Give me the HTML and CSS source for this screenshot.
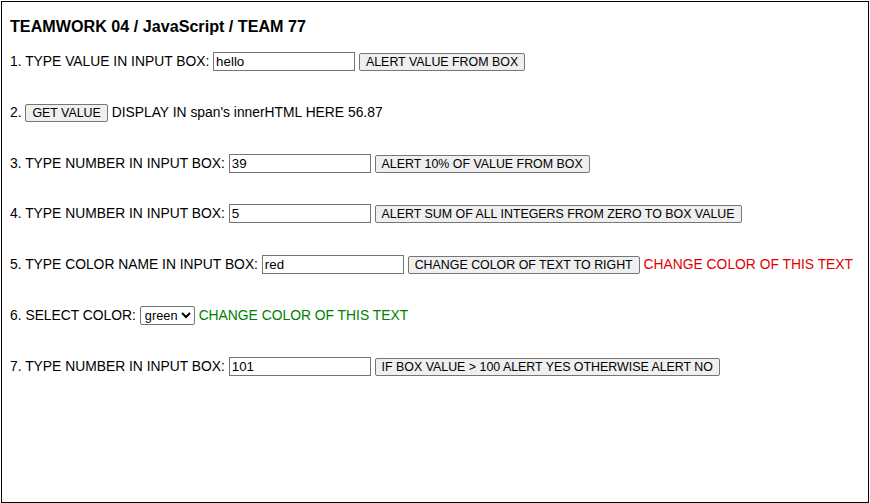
FILE: index.html
```html
<!DOCTYPE html>
<html>
<head>
<meta charset="utf-8">
<title>TEAMWORK 04</title>
<link rel="stylesheet" href="styles.css">
</head>
<body>
<div class="frame">
  <h1 class="title">TEAMWORK 04 / JavaScript / TEAM 77</h1>
  <div class="rows">
    <div class="row">1. TYPE VALUE IN INPUT BOX: <input class="box" type="text" value="hello"> <button class="btn">ALERT VALUE FROM BOX</button></div>
    <div class="row">2. <button class="btn">GET VALUE</button> DISPLAY IN span's innerHTML HERE <span>56.87</span></div>
    <div class="row">3. TYPE NUMBER IN INPUT BOX: <input class="box" type="text" value="39"> <button class="btn">ALERT 10% OF VALUE FROM BOX</button></div>
    <div class="row">4. TYPE NUMBER IN INPUT BOX: <input class="box" type="text" value="5"> <button class="btn">ALERT SUM OF ALL INTEGERS FROM ZERO TO BOX VALUE</button></div>
    <div class="row">5. TYPE COLOR NAME IN INPUT BOX: <input class="box" type="text" value="red"> <button class="btn">CHANGE COLOR OF TEXT TO RIGHT</button> <span class="red">CHANGE COLOR OF THIS TEXT</span></div>
    <div class="row">6. SELECT COLOR: <select class="sel"><option>red</option><option selected>green</option><option>blue</option></select> <span class="green">CHANGE COLOR OF THIS TEXT</span></div>
    <div class="row">7. TYPE NUMBER IN INPUT BOX: <input class="box" type="text" value="101"> <button class="btn">IF BOX VALUE &gt; 100 ALERT YES OTHERWISE ALERT NO</button></div>
  </div>
</div>
</body>
</html>
```

FILE: styles.css
```css
html, body {
  margin: 0;
  padding: 0;
}
body {
  font-family: "Liberation Sans", Arial, sans-serif;
  font-size: 13.85px;
  color: #000;
  background: #fff;
}
.frame {
  box-sizing: border-box;
  width: 868px;
  height: 502px;
  margin: 1px 0 0 1px;
  border: 1px solid #000;
  padding: 0 8px;
}
.title {
  font-size: 16.15px;
  font-weight: bold;
  margin: 15px 0 0 0;
  line-height: 19px;
}
.rows {
  display: flex;
  flex-direction: column;
  gap: 29.8px;
  margin-top: 15px;
}
.row {
  height: 21px;
  line-height: 21px;
  white-space: nowrap;
}
.box, .sel {
  font-family: "Liberation Sans", Arial, sans-serif;
  font-size: 13.33px;
}
.btn {
  font-family: "Liberation Sans", Arial, sans-serif;
  font-size: 12.4px;
}
.box {
  width: 136px;
  padding: 1px 2px;
  border: 1px solid #767676;
  border-radius: 0;
}
.btn {
  background: #efefef;
  border: 1px solid #767676;
  border-radius: 2px;
  padding: 1px 6px;
  color: #000;
}
.sel {
  font-size: 12.8px;
  border: 1px solid #767676;
  border-radius: 2px;
  background: #fff;
}
.red { color: #e00000; }
.green { color: #008000; }
```
